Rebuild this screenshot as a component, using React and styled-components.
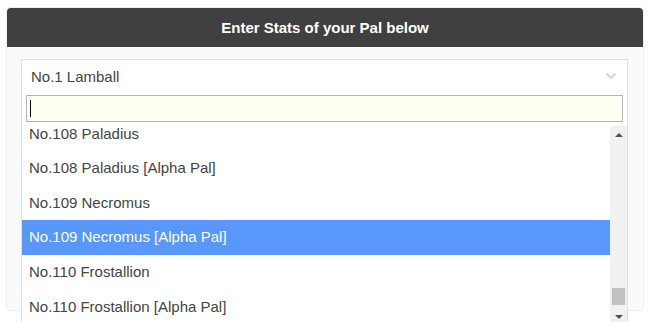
import React from "react";
import styled, { createGlobalStyle } from "styled-components";

const GlobalStyle = createGlobalStyle`
  html {
    overflow: hidden;
  }
  html, body {
    margin: 0;
    padding: 0;
    background: #ffffff;
    font-family: "Liberation Sans", Arial, sans-serif;
  }
  * { box-sizing: border-box; }
`;

const Page = styled.div`
  min-height: 100vh;
  padding: 8px 7px 0 7px;
`;

const Card = styled.div`
  height: 302px;
  background: #fafafa;
  border-radius: 4px;
  box-shadow: 0 0 0 1px #efefef, 0 1px 3px rgba(0, 0, 0, 0.06);
`;

const Header = styled.div`
  height: 39px;
  background: #404040;
  border-radius: 4px 4px 0 0;
  color: #ffffff;
  font-weight: bold;
  font-size: 15px;
  display: flex;
  align-items: center;
  justify-content: center;
`;

const Body = styled.div`
  padding: 12px 15px 0 14px;
`;

const SelectWrap = styled.div`
  position: relative;
`;

const Selection = styled.div`
  height: 32px;
  border: 1px solid #dbe0e0;
  border-bottom: none;
  background: #ffffff;
  display: flex;
  align-items: center;
  justify-content: space-between;
  padding: 1px 9px 0 9px;
  font-size: 15px;
  color: #444444;
`;

const Chevron = styled.svg`
  width: 12px;
  height: 10px;
  margin-right: 1px;
`;

const Dropdown = styled.div`
  position: absolute;
  top: 100%;
  left: 0;
  right: 0;
  background: #ffffff;
  border: 1px solid #dbe0e0;
  border-top: none;
  z-index: 10;
`;

const SearchWrap = styled.div`
  padding: 4px 4px 4px 4px;
`;

const SearchField = styled.div`
  height: 27px;
  border: 1px solid #b5b5b5;
  background: #fefff0;
  padding: 4px 3px;
  display: flex;
  align-items: center;
`;

const Caret = styled.span`
  display: block;
  width: 1px;
  height: 17px;
  background: #000000;
`;

const Results = styled.div`
  display: flex;
  height: 199px;
`;

const List = styled.div`
  flex: 1;
  overflow: hidden;
`;

const ListInner = styled.div`
  margin-top: -9.3px;
`;

const Option = styled.div`
  padding: 6px 7px;
  line-height: 22.6px;
  font-size: 15px;
  white-space: nowrap;
  color: ${(p) => (p.$active ? "#ffffff" : "#444444")};
  background: ${(p) => (p.$active ? "#5897fb" : "transparent")};
`;

const Scrollbar = styled.div`
  width: 17px;
  background: #f1f1f1;
  display: flex;
  flex-direction: column;
`;

const ArrowButton = styled.div`
  height: 17px;
  display: flex;
  align-items: center;
  justify-content: center;
  &::before {
    content: "";
    width: 0;
    height: 0;
    border-left: 4px solid transparent;
    border-right: 4px solid transparent;
    ${(p) =>
      p.$down
        ? "border-top: 4px solid #505050;"
        : "border-bottom: 4px solid #505050;"}
  }
`;

const Track = styled.div`
  flex: 1;
  padding: 145px 2px 0 2px;
`;

const Thumb = styled.div`
  height: 17px;
  background: #c1c1c1;
`;

const options = [
  "No.108 Paladius",
  "No.108 Paladius [Alpha Pal]",
  "No.109 Necromus",
  "No.109 Necromus [Alpha Pal]",
  "No.110 Frostallion",
  "No.110 Frostallion [Alpha Pal]",
];

export default function App() {
  return (
    <>
      <GlobalStyle />
      <Page>
        <Card>
          <Header>Enter Stats of your Pal below</Header>
          <Body>
            <SelectWrap>
              <Selection>
                <span>No.1 Lamball</span>
                <Chevron viewBox="0 0 12 10">
                  <path
                    d="M1.5 2.5 L6 7 L10.5 2.5"
                    fill="none"
                    stroke="#cfd9d9"
                    strokeWidth="2.2"
                  />
                </Chevron>
              </Selection>
              <Dropdown>
                <SearchWrap>
                  <SearchField>
                    <Caret />
                  </SearchField>
                </SearchWrap>
                <Results>
                  <List>
                    <ListInner>
                      {options.map((o) => (
                        <Option key={o} $active={o === "No.109 Necromus [Alpha Pal]"}>
                          {o}
                        </Option>
                      ))}
                    </ListInner>
                  </List>
                  <Scrollbar>
                    <ArrowButton />
                    <Track>
                      <Thumb />
                    </Track>
                    <ArrowButton $down />
                  </Scrollbar>
                </Results>
              </Dropdown>
            </SelectWrap>
          </Body>
        </Card>
      </Page>
    </>
  );
}
